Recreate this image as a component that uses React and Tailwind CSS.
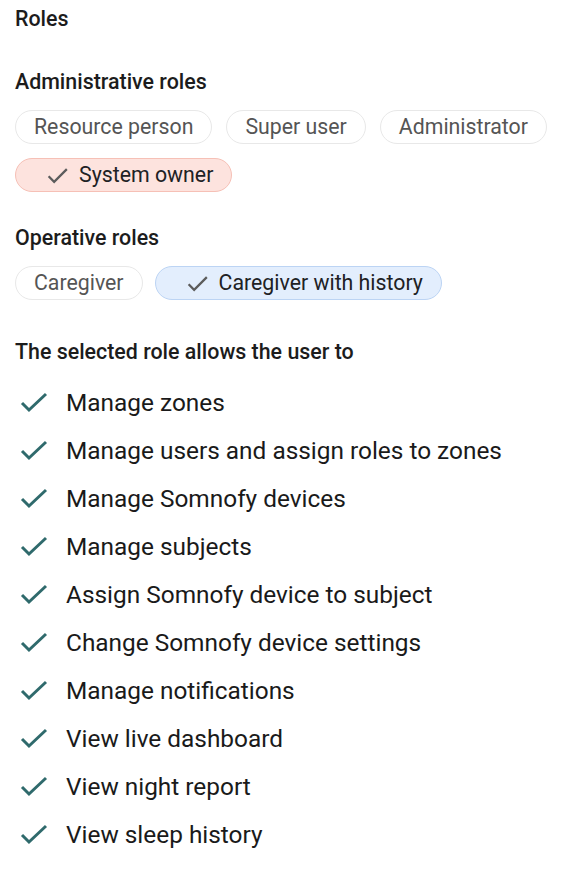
import React from 'react';

const adminRoles = [
  { label: 'Resource person' },
  { label: 'Super user' },
  { label: 'Administrator' },
  { label: 'System owner', selected: 'pink' },
];

const operativeRoles = [
  { label: 'Caregiver' },
  { label: 'Caregiver with history', selected: 'blue' },
];

const permissions = [
  'Manage zones',
  'Manage users and assign roles to zones',
  'Manage Somnofy devices',
  'Manage subjects',
  'Assign Somnofy device to subject',
  'Change Somnofy device settings',
  'Manage notifications',
  'View live dashboard',
  'View night report',
  'View sleep history',
];

function ChipCheck() {
  return (
    <svg width="27" height="27" viewBox="0 0 24 24" className="shrink-0">
      <path d="M9 16.17L4.83 12l-1.42 1.41L9 19 21 7l-1.41-1.41z" fill="#5c5c5c" />
    </svg>
  );
}

function ListCheck() {
  return (
    <svg width="30" height="22" viewBox="0 0 30 22" className="shrink-0">
      <polyline points="3,11 10,18 27,2" fill="none" stroke="#2f6a6c" strokeWidth="3" />
    </svg>
  );
}

function Chip({ label, selected }) {
  if (selected === 'pink') {
    return (
      <div className="flex items-center h-[34px] rounded-full border border-[#f6c0b6] bg-[#fde3de] pl-[28px] pr-[18px] gap-[8px] text-[21.3px] text-[#202124]">
        <ChipCheck />
        <span>{label}</span>
      </div>
    );
  }
  if (selected === 'blue') {
    return (
      <div className="flex items-center h-[34px] rounded-full border border-[#bcd4f4] bg-[#e3eefd] pl-[28px] pr-[18px] gap-[8px] text-[21.3px] text-[#202124]">
        <ChipCheck />
        <span>{label}</span>
      </div>
    );
  }
  return (
    <div className="flex items-center h-[34px] rounded-full border border-[#e8e8e8] bg-white px-[18px] text-[21.3px] text-[#555]">
      {label}
    </div>
  );
}

export default function App() {
  return (
    <div className="min-h-screen bg-white px-[15px] pt-[6px]" style={{ fontFamily: 'Roboto, "Noto Sans", sans-serif' }}>
      <h1 className="text-[21.4px] font-medium text-[#1c1c1c] leading-[26px]">Roles</h1>

      <h2 className="mt-[37px] text-[21.4px] font-medium text-[#1c1c1c] leading-[26px]">Administrative roles</h2>
      <div className="mt-[15px] flex flex-wrap gap-x-[14px] gap-y-[14px]">
        {adminRoles.map((r) => (
          <Chip key={r.label} {...r} />
        ))}
      </div>

      <h2 className="mt-[33px] text-[21.4px] font-medium text-[#1c1c1c] leading-[26px]">Operative roles</h2>
      <div className="mt-[15px] flex flex-wrap gap-x-[12px] gap-y-[14px]">
        {operativeRoles.map((r) => (
          <Chip key={r.label} {...r} />
        ))}
      </div>

      <h2 className="mt-[39px] text-[21.4px] font-medium text-[#1c1c1c] leading-[26px]">The selected role allows the user to</h2>
      <ul className="mt-[14px] flex flex-col">
        {permissions.map((p) => (
          <li key={p} className="flex items-center h-[48px]">
            <div className="pl-[4px] w-[51px]">
              <ListCheck />
            </div>
            <span className="text-[24.4px] text-[#1a1a1a]">{p}</span>
          </li>
        ))}
      </ul>
    </div>
  );
}
